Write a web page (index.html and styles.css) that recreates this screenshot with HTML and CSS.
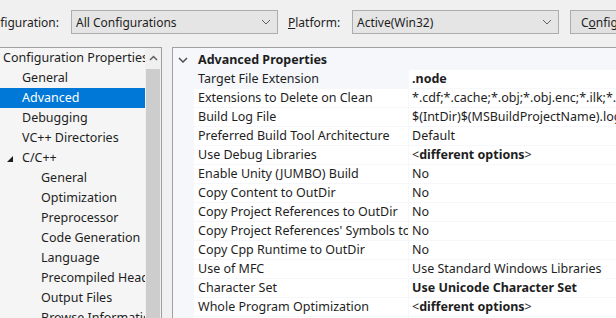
FILE: index.html
```html
<!DOCTYPE html>
<html lang="en">
<head>
<meta charset="UTF-8" />
<title>Property Pages</title>
<link rel="stylesheet" href="styles.css">
</head>
<body>

<div class="toolbar">
  <div class="lbl lbl-config"><span>Configuration:</span></div>
  <div class="combo">
    <span>All Configurations</span>
    <svg class="chev" width="10" height="6" viewBox="0 0 10 6"><path d="M1 1 L5 5 L9 1" fill="none" stroke="#606060" stroke-width="1"/></svg>
  </div>
  <div class="lbl lbl-platform"><span><u>P</u>latform:</span></div>
  <div class="combo">
    <span>Active(Win32)</span>
    <svg class="chev" width="10" height="6" viewBox="0 0 10 6"><path d="M1 1 L5 5 L9 1" fill="none" stroke="#606060" stroke-width="1"/></svg>
  </div>
  <button class="btn">C<u>o</u>nfiguration Manager...</button>
</div>

<div class="main">
  <div class="tree-pane">
    <ul class="tree">
      <li class="lvl0">Configuration Properties</li>
      <li class="lvl1">General</li>
      <li class="lvl1 selected">Advanced</li>
      <li class="lvl1">Debugging</li>
      <li class="lvl1">VC++ Directories</li>
      <li class="lvl1 open"><span class="tri"></span>C/C++</li>
      <li class="lvl2">General</li>
      <li class="lvl2">Optimization</li>
      <li class="lvl2">Preprocessor</li>
      <li class="lvl2">Code Generation</li>
      <li class="lvl2">Language</li>
      <li class="lvl2">Precompiled Headers</li>
      <li class="lvl2">Output Files</li>
      <li class="lvl2">Browse Information</li>
    </ul>
    <div class="scrollbar">
      <div class="sb-up">
        <svg width="9" height="6" viewBox="0 0 9 6"><path d="M1 5 L4.5 1.5 L8 5" fill="none" stroke="#606060" stroke-width="1.5"/></svg>
      </div>
      <div class="sb-thumb"></div>
    </div>
  </div>

  <div class="props-pane">
    <div class="group-head">
      <svg class="gchev" width="10" height="6" viewBox="0 0 10 6"><path d="M1 1 L5 5 L9 1" fill="none" stroke="#505050" stroke-width="1.5"/></svg>
      <span>Advanced Properties</span>
    </div>
    <div class="grid">
      <div class="row current"><div class="name">Target File Extension</div><div class="val"><b>.node</b></div></div>
      <div class="row"><div class="name">Extensions to Delete on Clean</div><div class="val">*.cdf;*.cache;*.obj;*.obj.enc;*.ilk;*.ipdb;*.iobj</div></div>
      <div class="row"><div class="name">Build Log File</div><div class="val">$(IntDir)$(MSBuildProjectName).log</div></div>
      <div class="row"><div class="name">Preferred Build Tool Architecture</div><div class="val">Default</div></div>
      <div class="row"><div class="name">Use Debug Libraries</div><div class="val">&lt;<b>different options</b>&gt;</div></div>
      <div class="row"><div class="name">Enable Unity (JUMBO) Build</div><div class="val">No</div></div>
      <div class="row"><div class="name">Copy Content to OutDir</div><div class="val">No</div></div>
      <div class="row"><div class="name">Copy Project References to OutDir</div><div class="val">No</div></div>
      <div class="row"><div class="name">Copy Project References' Symbols to OutDir</div><div class="val">No</div></div>
      <div class="row"><div class="name">Copy Cpp Runtime to OutDir</div><div class="val">No</div></div>
      <div class="row"><div class="name">Use of MFC</div><div class="val">Use Standard Windows Libraries</div></div>
      <div class="row"><div class="name">Character Set</div><div class="val"><b>Use Unicode Character Set</b></div></div>
      <div class="row"><div class="name">Whole Program Optimization</div><div class="val">&lt;<b>different options</b>&gt;</div></div>
      <div class="row"><div class="name">&nbsp;</div><div class="val">&nbsp;</div></div>
    </div>
  </div>
</div>

</body>
</html>
```

FILE: styles.css
```css
html, body {
  margin: 0;
  padding: 0;
}
body {
  width: 616px;
  height: 318px;
  overflow: hidden;
  background: #f0f0f0;
  color: #1e1e1e;
  font-family: "Noto Sans", "Open Sans", sans-serif;
  font-size: 12px;
}
.toolbar {
  display: flex;
  align-items: center;
  height: 24px;
  padding-top: 10px;
  white-space: nowrap;
}
.lbl {
  display: flex;
  justify-content: flex-end;
  overflow: hidden;
  flex-shrink: 0;
}
.lbl-config {
  width: 59px;
  margin-right: 12px;
}
.lbl-platform {
  width: 54px;
  margin-left: 10px;
  margin-right: 10px;
  justify-content: flex-start;
}
.combo {
  flex-shrink: 0;
  display: flex;
  align-items: center;
  justify-content: space-between;
  padding: 0 6px 0 4px;
  box-sizing: border-box;
  width: 207px;
  height: 24px;
  background: #e5e5e5;
  border: 1px solid #adadad;
}
.btn {
  margin-left: 11px;
  height: 24px;
  flex-shrink: 0;
  padding: 0 10px;
  font: inherit;
  color: inherit;
  background: #e1e1e1;
  border: 1px solid #adadad;
}
.main {
  display: flex;
  margin-top: 13px;
  height: 271px;
}
.tree-pane {
  width: 162px;
  flex-shrink: 0;
  display: flex;
  background: #f5f5f5;
  border-top: 1px solid #a0a0a0;
  border-right: 1px solid #a0a0a0;
  box-sizing: border-box;
  overflow: hidden;
}
.tree {
  list-style: none;
  margin: 0;
  padding: 0;
  width: 145px;
  flex-shrink: 0;
  overflow: hidden;
}
.tree li {
  height: 20px;
  line-height: 20px;
  white-space: nowrap;
  font-size: 12.5px;
  display: flex;
  align-items: center;
}
.lvl0 { padding-left: 3px; }
.lvl1 { padding-left: 22px; }
.lvl2 { padding-left: 41px; }
.tree li.selected {
  background: #0078d7;
  color: #fff;
}
.tree li.open {
  padding-left: 7px;
}
.tri {
  width: 0;
  height: 0;
  border-left: 6px solid transparent;
  border-bottom: 6px solid #1e1e1e;
  margin-right: 9px;
  margin-top: 2px;
}
.scrollbar {
  width: 16px;
  flex-shrink: 0;
  background: #f0f0f0;
  display: flex;
  flex-direction: column;
}
.sb-up {
  height: 20px;
  display: flex;
  align-items: center;
  justify-content: center;
}
.sb-thumb {
  flex: 1;
  margin: 1px 1px 0 1px;
  background: #cdcdcd;
}
.props-pane {
  margin-left: 10px;
  flex: 1;
  padding-top: 1px;
  background: #f5f7fb;
  border-top: 1px solid #a0a0a0;
  border-left: 1px solid #a0a0a0;
  overflow: hidden;
}
.group-head {
  height: 21px;
  display: flex;
  align-items: center;
  font-weight: bold;
  font-size: 12.5px;
}
.gchev {
  margin-left: 5px;
  margin-right: 10px;
}
.grid {
  display: flex;
  flex-direction: column;
  gap: 1px;
}
.row {
  display: flex;
  height: 18px;
  line-height: 18px;
  margin-left: 21px;
  white-space: nowrap;
  font-size: 12.5px;
}
.name {
  width: 214px;
  flex-shrink: 0;
  padding-left: 4px;
  box-sizing: border-box;
  overflow: hidden;
  text-overflow: clip;
  background: #fff;
  margin-right: 1px;
}
.row.current .name {
  background: transparent;
}
.val {
  flex: 1;
  padding-left: 3px;
  overflow: hidden;
  background: #fff;
}
```
